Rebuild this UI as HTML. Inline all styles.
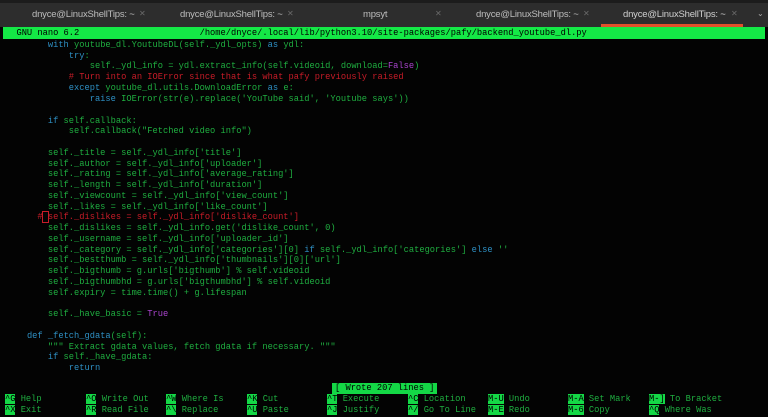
<!DOCTYPE html>
<html><head><meta charset="utf-8"><style>
*{margin:0;padding:0;box-sizing:border-box}
body{width:768px;height:417px;background:#030303;overflow:hidden;position:relative;font-family:"Liberation Mono",monospace;}
.tabbar{position:absolute;left:0;top:0;width:768px;height:27px;background:#2d2d2d;border-top:3px solid #1c1c1c}
.tab{position:absolute;top:9px;font-family:"Liberation Sans",sans-serif;font-size:9.5px;color:#bdbdbd;letter-spacing:-0.2px}
.x{position:absolute;top:9px;font-family:"Liberation Sans",sans-serif;font-size:8px;color:#6a6a6a}
.act{position:absolute;left:601px;top:24px;width:142px;height:3px;background:#e0502a}
.l{position:absolute;left:6px;white-space:pre;font-size:8.73px;line-height:11px;height:11px;color:#1fae40;margin-top:1px}
.k{color:#2e90c4}.c{color:#c81c28}.m{color:#a844cc}
.hdr{position:absolute;left:3px;top:27px;width:762px;height:12px;background:#14e846}
.hl{position:absolute;white-space:pre;font-size:8.73px;line-height:11px;color:#1fae40}
.b{background:#14d846;color:#000}
</style></head><body>
<div class="tabbar"></div>
<div class="tab" style="left:32px">dnyce@LinuxShellTips: ~</div><div class="x" style="left:139px">✕</div>
<div class="tab" style="left:180px">dnyce@LinuxShellTips: ~</div><div class="x" style="left:287px">✕</div>
<div class="tab" style="left:363px">mpsyt</div><div class="x" style="left:435px">✕</div>
<div class="tab" style="left:476px">dnyce@LinuxShellTips: ~</div><div class="x" style="left:583px">✕</div>
<div class="tab" style="left:623px;color:#d0d0d0">dnyce@LinuxShellTips: ~</div><div class="x" style="left:731px">✕</div>
<div class="x" style="left:757px;top:9px;color:#aaa">⌄</div>
<div class="act"></div>
<div class="hdr"></div>
<div class="l" style="top:27px;color:#000">  GNU nano 6.2                       /home/dnyce/.local/lib/python3.10/site-packages/pafy/backend_youtube_dl.py</div>
<div class="l" style="top:39px">        <span class="k">with</span> youtube_dl.YoutubeDL(self._ydl_opts) <span class="k">as</span> ydl:</div>
<div class="l" style="top:50px">            <span class="k">try</span>:</div>
<div class="l" style="top:60px">                self._ydl_info = ydl.extract_info(self.videoid, download=<span class="m">False</span>)</div>
<div class="l" style="top:71px">            <span class="c"># Turn into an IOError since that is what pafy previously raised</span></div>
<div class="l" style="top:82px">            <span class="k">except</span> youtube_dl.utils.DownloadError <span class="k">as</span> e:</div>
<div class="l" style="top:93px">                <span class="k">raise</span> IOError(str(e).replace('YouTube said', 'Youtube says'))</div>
<div class="l" style="top:115px">        <span class="k">if</span> self.callback:</div>
<div class="l" style="top:125px">            self.callback("Fetched video info")</div>
<div class="l" style="top:147px">        self._title = self._ydl_info['title']</div>
<div class="l" style="top:158px">        self._author = self._ydl_info['uploader']</div>
<div class="l" style="top:168px">        self._rating = self._ydl_info['average_rating']</div>
<div class="l" style="top:179px">        self._length = self._ydl_info['duration']</div>
<div class="l" style="top:190px">        self._viewcount = self._ydl_info['view_count']</div>
<div class="l" style="top:201px">        self._likes = self._ydl_info['like_count']</div>
<div class="l c" style="top:211px">      #<span style="outline:1px solid #c81c28"> </span>self._dislikes = self._ydl_info['dislike_count']</div>
<div class="l" style="top:222px">        self._dislikes = self._ydl_info.get('dislike_count', 0)</div>
<div class="l" style="top:233px">        self._username = self._ydl_info['uploader_id']</div>
<div class="l" style="top:244px">        self._category = self._ydl_info['categories'][0] <span class="k">if</span> self._ydl_info['categories'] <span class="k">else</span> ''</div>
<div class="l" style="top:254px">        self._bestthumb = self._ydl_info['thumbnails'][0]['url']</div>
<div class="l" style="top:265px">        self._bigthumb = g.urls['bigthumb'] % self.videoid</div>
<div class="l" style="top:276px">        self._bigthumbhd = g.urls['bigthumbhd'] % self.videoid</div>
<div class="l" style="top:287px">        self.expiry = time.time() + g.lifespan</div>
<div class="l" style="top:308px">        self._have_basic = <span class="m">True</span></div>
<div class="l" style="top:330px">    <span class="k">def</span> <span class="k">_fetch_gdata</span>(self):</div>
<div class="l" style="top:341px">        """ Extract gdata values, fetch gdata if necessary. """</div>
<div class="l" style="top:351px">        <span class="k">if</span> self._have_gdata:</div>
<div class="l" style="top:362px">            <span class="k">return</span></div>
<div class="hl b" style="left:332px;top:383px;padding:0 3px">[ Wrote 207 lines ]</div>
<div class="hl" style="left:5px;top:394px"><span class="b">^G</span> Help</div>
<div class="hl" style="left:5px;top:405px"><span class="b">^X</span> Exit</div>
<div class="hl" style="left:86px;top:394px"><span class="b">^O</span> Write Out</div>
<div class="hl" style="left:86px;top:405px"><span class="b">^R</span> Read File</div>
<div class="hl" style="left:166px;top:394px"><span class="b">^W</span> Where Is</div>
<div class="hl" style="left:166px;top:405px"><span class="b">^\</span> Replace</div>
<div class="hl" style="left:247px;top:394px"><span class="b">^K</span> Cut</div>
<div class="hl" style="left:247px;top:405px"><span class="b">^U</span> Paste</div>
<div class="hl" style="left:327px;top:394px"><span class="b">^T</span> Execute</div>
<div class="hl" style="left:327px;top:405px"><span class="b">^J</span> Justify</div>
<div class="hl" style="left:408px;top:394px"><span class="b">^C</span> Location</div>
<div class="hl" style="left:408px;top:405px"><span class="b">^/</span> Go To Line</div>
<div class="hl" style="left:488px;top:394px"><span class="b">M-U</span> Undo</div>
<div class="hl" style="left:488px;top:405px"><span class="b">M-E</span> Redo</div>
<div class="hl" style="left:568px;top:394px"><span class="b">M-A</span> Set Mark</div>
<div class="hl" style="left:568px;top:405px"><span class="b">M-6</span> Copy</div>
<div class="hl" style="left:649px;top:394px"><span class="b">M-]</span> To Bracket</div>
<div class="hl" style="left:649px;top:405px"><span class="b">^Q</span> Where Was</div>
</body></html>
